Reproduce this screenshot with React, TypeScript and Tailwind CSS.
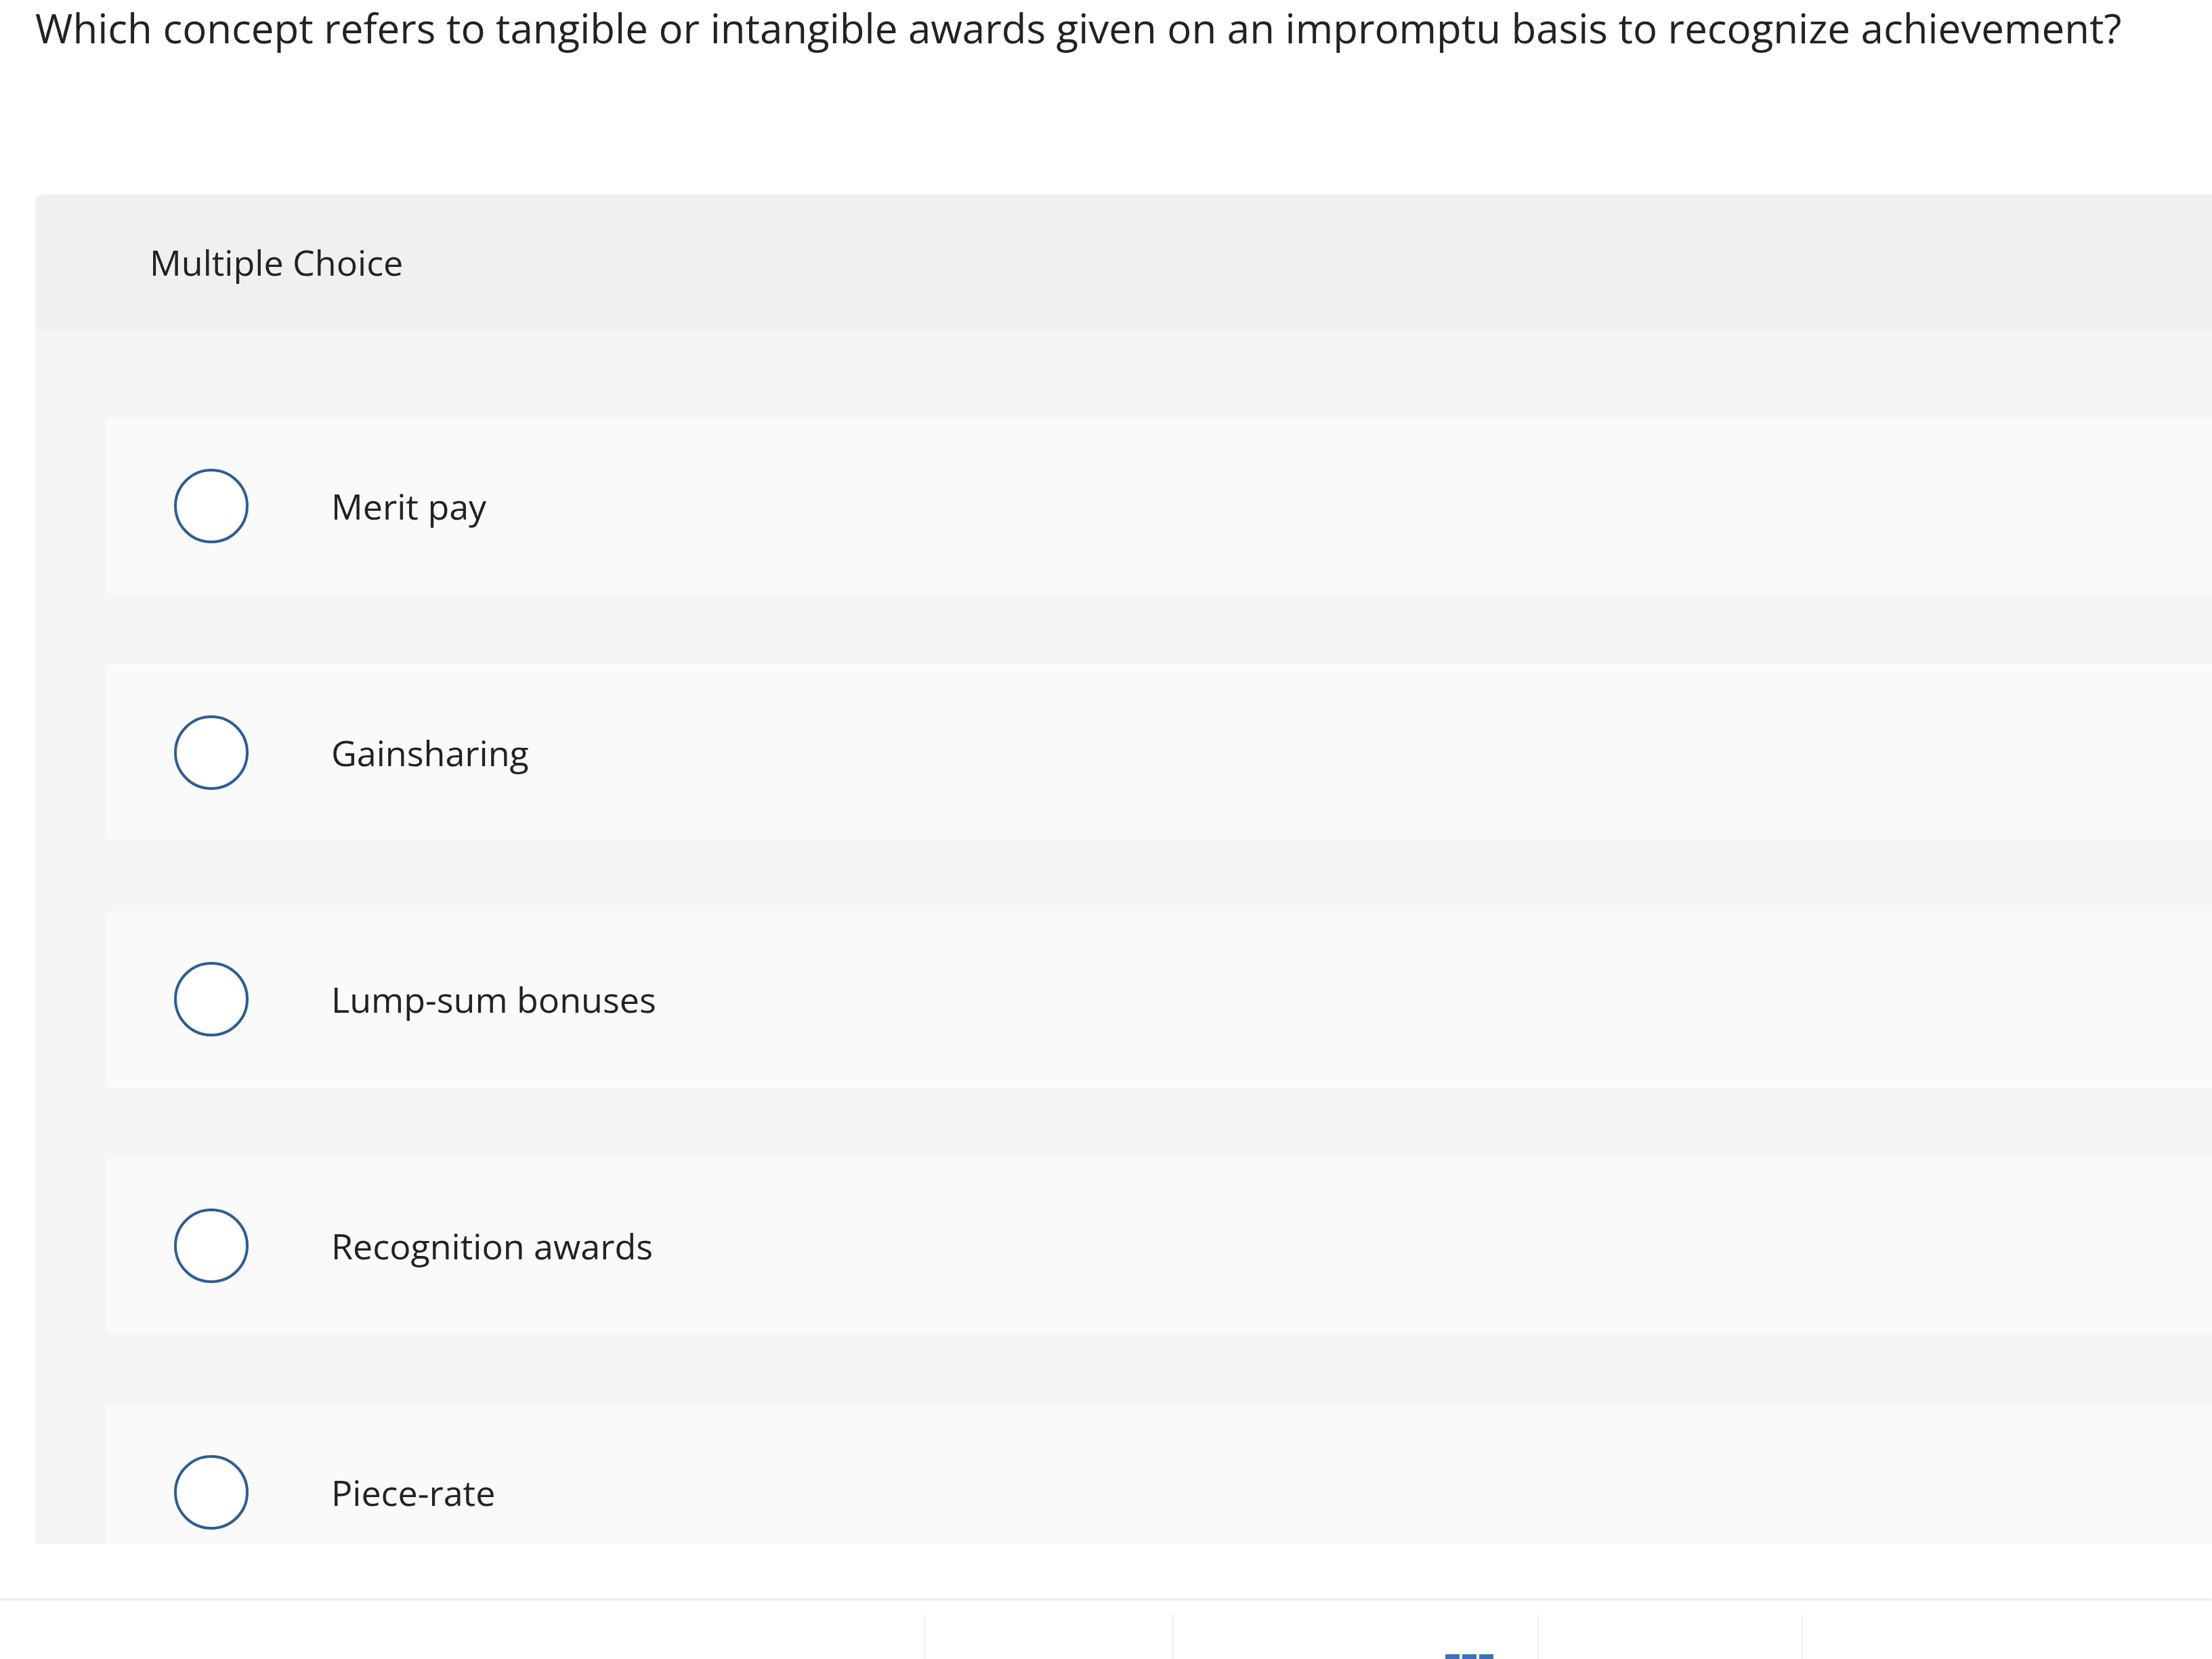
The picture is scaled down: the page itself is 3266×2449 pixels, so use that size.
const options = [
  "Merit pay",
  "Gainsharing",
  "Lump-sum bonuses",
  "Recognition awards",
  "Piece-rate",
];

function Radio() {
  return (
    <span className="block w-[110px] h-[110px] shrink-0 rounded-full border-[4px] border-[#2b5d97] bg-white" />
  );
}

function OptionRow({ label }: { label: string }) {
  return (
    <div className="flex h-[260px] shrink-0 items-center rounded-l-[8px] bg-[#fafafa] pl-[101px]">
      <Radio />
      <span className="ml-[122px] text-[52px] leading-[1.2] text-[#222222]">{label}</span>
    </div>
  );
}

function GridIcon() {
  return (
    <div className="grid w-fit grid-cols-[repeat(3,21px)] gap-[4px]">
      {Array.from({ length: 9 }).map((_, i) => (
        <span key={i} className="block w-[21px] h-[21px] bg-[#3b72b8]" />
      ))}
    </div>
  );
}

export default function App() {
  return (
    <div
      className="flex h-[2449px] w-[3266px] flex-col overflow-hidden bg-white"
      style={{ fontFamily: "'Open Sans', Lato, sans-serif" }}
    >
      <h1 className="h-[82px] shrink-0 whitespace-nowrap pl-[52px] text-[60px] font-normal leading-[82px] text-[#222222]">
        Which concept refers to tangible or intangible awards given on an impromptu basis to recognize achievement?
      </h1>

      <section className="ml-[52px] mt-[205px] flex h-[1992px] shrink-0 flex-col overflow-hidden rounded-tl-[12px]">
        <div className="flex h-[200px] shrink-0 items-center bg-[#f0f0f0] pl-[169px]">
          <span className="text-[52px] leading-[1.2] text-[#222222]">Multiple Choice</span>
        </div>
        <div className="flex flex-1 flex-col gap-[104px] overflow-hidden bg-[#f5f5f5] pl-[104px] pt-[130px]">
          {options.map((o) => (
            <OptionRow key={o} label={o} />
          ))}
        </div>
      </section>

      <footer className="mt-[81px] flex flex-1 border-t-[3px] border-[#efefef] pt-[20px] shadow-[0_-1px_3px_rgba(0,0,0,0.03)]">
        <div className="w-[1364px] shrink-0" />
        <div className="w-[367px] shrink-0 border-l-2 border-[#f0f0f0]" />
        <div className="w-[539px] shrink-0 border-l-2 border-[#f0f0f0] pl-[401px] pt-[59px]">
          <GridIcon />
        </div>
        <div className="w-[390px] shrink-0 border-l-2 border-[#f0f0f0]" />
        <div className="flex-1 border-l-2 border-[#f0f0f0]" />
      </footer>
    </div>
  );
}
